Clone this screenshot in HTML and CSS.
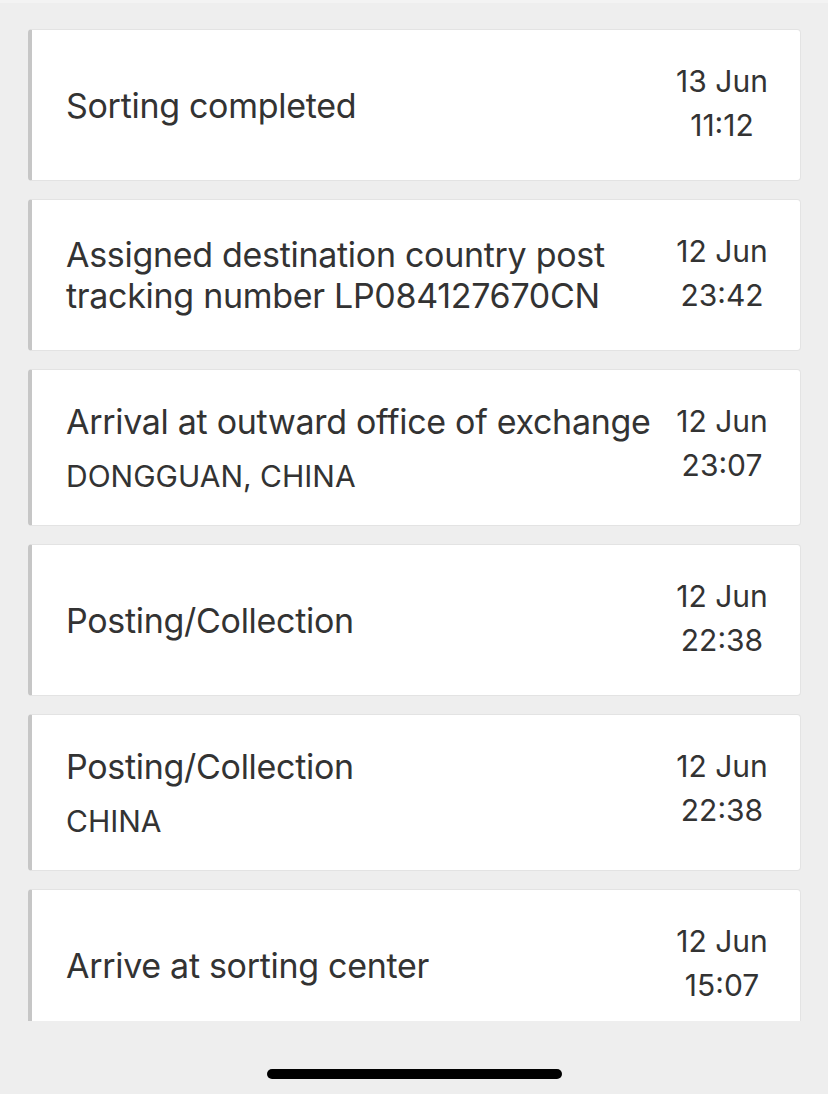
FILE: index.html
```html
<!DOCTYPE html>
<html>
<head>
<meta charset="utf-8">
<link rel="stylesheet" href="styles.css">
</head>
<body>
<div class="screen">
  <div class="list">
    <div class="card">
      <div class="info"><div class="title">Sorting completed</div></div>
      <div class="date"><div>13 Jun</div><div>11:12</div></div>
    </div>
    <div class="card">
      <div class="info"><div class="title">Assigned destination country post tracking number LP084127670CN</div></div>
      <div class="date"><div>12 Jun</div><div>23:42</div></div>
    </div>
    <div class="card">
      <div class="info"><div class="title">Arrival at outward office of exchange</div><div class="sub">DONGGUAN, CHINA</div></div>
      <div class="date"><div>12 Jun</div><div>23:07</div></div>
    </div>
    <div class="card">
      <div class="info"><div class="title">Posting/Collection</div></div>
      <div class="date"><div>12 Jun</div><div>22:38</div></div>
    </div>
    <div class="card">
      <div class="info"><div class="title">Posting/Collection</div><div class="sub">CHINA</div></div>
      <div class="date"><div>12 Jun</div><div>22:38</div></div>
    </div>
    <div class="card">
      <div class="info"><div class="title">Arrive at sorting center</div></div>
      <div class="date"><div>12 Jun</div><div>15:07</div></div>
    </div>
  </div>
  <div class="home"><div class="bar"></div></div>
</div>
</body>
</html>
```
FILE: styles.css
```css
html, body {
  margin: 0;
  padding: 0;
  background: #eeeeee;
}
.screen {
  width: 828px;
  height: 1094px;
  background: #eeeeee;
  font-family: Inter, "Noto Sans", sans-serif;
  color: #333333;
  overflow: hidden;
  border-top: 3px solid #f3f3f3;
  box-sizing: border-box;
}
.list {
  height: 1018px;
  overflow: hidden;
  padding: 26px 27px 0 28px;
  box-sizing: border-box;
  display: flex;
  flex-direction: column;
  gap: 18px;
}
.card {
  flex: none;
  display: flex;
  align-items: center;
  background: #ffffff;
  border: 1px solid #e3e3e3;
  border-left: 4px solid #c6c6c6;
  border-radius: 4px;
  padding: 31px 0;
}
.info {
  flex: 1;
  padding-left: 34px;
  min-width: 0;
}
.title {
  font-size: 34px;
  line-height: 41px;
  letter-spacing: -0.3px;
}
.sub {
  font-size: 30px;
  line-height: 36px;
  margin-top: 16px;
}
.date {
  flex: none;
  align-self: flex-start;
  width: 124px;
  margin: -2px 0 2px;
  padding-right: 16px;
  text-align: center;
  font-size: 30px;
  line-height: 44px;
}
.home {
  display: flex;
  justify-content: center;
  padding-top: 48px;
}
.bar {
  width: 295px;
  height: 10px;
  border-radius: 5px;
  background: #000000;
}
```
